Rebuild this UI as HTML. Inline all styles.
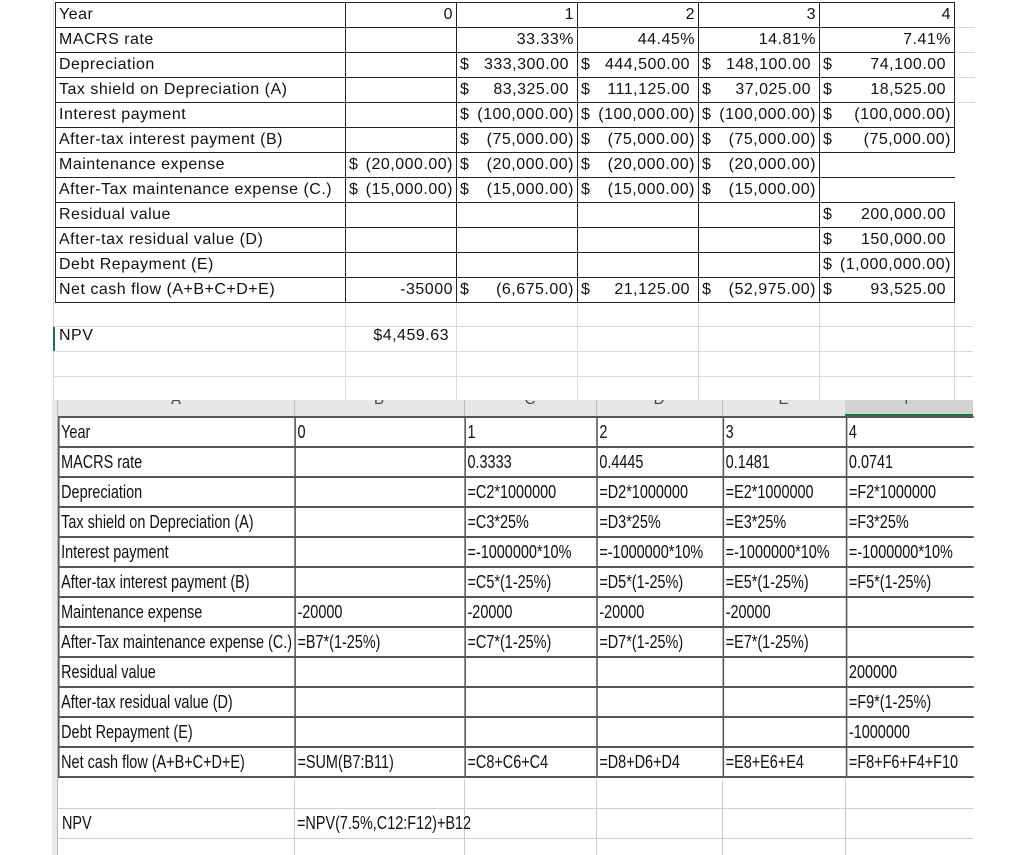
<!DOCTYPE html>
<html><head><meta charset="utf-8"><style>
body{margin:0;width:1024px;height:855px;background:#fff;position:relative;overflow:hidden}
.g{position:absolute;background:#dadada}
table{position:absolute;border-collapse:collapse;table-layout:fixed}
.t1{left:55px;top:2px;width:899px;font-family:"Liberation Sans",sans-serif;font-size:16px;letter-spacing:0.5px;color:#111}
.t1 td{height:24px;border:1px solid #222;padding:0 3px;white-space:nowrap;overflow:hidden;line-height:24px}
.r{text-align:right}
.c{display:flex;justify-content:space-between}
.t2{left:58px;top:416px;width:1173px;transform:scaleX(0.78);transform-origin:0 0;font-family:"Liberation Sans",sans-serif;font-size:18.5px;color:#111}
.t2 td{height:28px;border:2px solid #555;padding:0 2px;white-space:nowrap;overflow:hidden;line-height:28px}
.sx{position:absolute;transform:scaleX(0.78);transform-origin:0 0;font:18.5px 'Liberation Sans',sans-serif;color:#111;white-space:nowrap}
</style></head><body>
<div class="g" style="left:53px;top:0;width:1px;height:400px"></div>
<div class="g" style="left:53px;top:326px;width:920px;height:1px"></div>
<div class="g" style="left:53px;top:351px;width:920px;height:1px"></div>
<div class="g" style="left:53px;top:376px;width:920px;height:1px"></div>
<div class="g" style="left:345px;top:301px;width:1px;height:99px"></div>
<div class="g" style="left:456px;top:301px;width:1px;height:99px"></div>
<div class="g" style="left:577px;top:301px;width:1px;height:99px"></div>
<div class="g" style="left:698px;top:301px;width:1px;height:99px"></div>
<div class="g" style="left:819px;top:301px;width:1px;height:99px"></div>
<div class="g" style="left:954px;top:301px;width:1px;height:99px"></div>
<div class="g" style="left:955px;top:27px;width:20px;height:1px"></div>
<div class="g" style="left:955px;top:52px;width:20px;height:1px"></div>
<div class="g" style="left:955px;top:77px;width:20px;height:1px"></div>
<div class="g" style="left:955px;top:102px;width:20px;height:1px"></div>
<div style="position:absolute;left:53px;top:327px;width:2px;height:24px;background:#217346"></div>
<div style="position:absolute;left:59px;top:327px;height:25px;line-height:25px;font:16px 'Liberation Sans',sans-serif;letter-spacing:0.5px;color:#111">NPV</div>
<div style="position:absolute;left:345px;width:104px;top:327px;height:25px;line-height:25px;text-align:right;font:16px 'Liberation Sans',sans-serif;letter-spacing:0.5px;color:#111">$4,459.63</div>

<table class="t1">
<colgroup><col style="width:290px"><col style="width:111px"><col style="width:121px"><col style="width:121px"><col style="width:121px"><col style="width:135px"></colgroup>
<tr><td>Year</td><td class="r">0</td><td class="r">1</td><td class="r">2</td><td class="r">3</td><td class="r">4</td></tr>
<tr><td>MACRS rate</td><td></td><td class="r">33.33%</td><td class="r">44.45%</td><td class="r">14.81%</td><td class="r">7.41%</td></tr>
<tr><td>Depreciation</td><td></td><td><div class="c"><span>$</span><span>333,300.00&nbsp;</span></div></td><td><div class="c"><span>$</span><span>444,500.00&nbsp;</span></div></td><td><div class="c"><span>$</span><span>148,100.00&nbsp;</span></div></td><td><div class="c"><span>$</span><span>74,100.00&nbsp;</span></div></td></tr>
<tr><td>Tax shield on Depreciation (A)</td><td></td><td><div class="c"><span>$</span><span>83,325.00&nbsp;</span></div></td><td><div class="c"><span>$</span><span>111,125.00&nbsp;</span></div></td><td><div class="c"><span>$</span><span>37,025.00&nbsp;</span></div></td><td><div class="c"><span>$</span><span>18,525.00&nbsp;</span></div></td></tr>
<tr><td>Interest payment</td><td></td><td><div class="c"><span>$</span><span>(100,000.00)</span></div></td><td><div class="c"><span>$</span><span>(100,000.00)</span></div></td><td><div class="c"><span>$</span><span>(100,000.00)</span></div></td><td><div class="c"><span>$</span><span>(100,000.00)</span></div></td></tr>
<tr><td>After-tax interest payment (B)</td><td></td><td><div class="c"><span>$</span><span>(75,000.00)</span></div></td><td><div class="c"><span>$</span><span>(75,000.00)</span></div></td><td><div class="c"><span>$</span><span>(75,000.00)</span></div></td><td><div class="c"><span>$</span><span>(75,000.00)</span></div></td></tr>
<tr><td>Maintenance expense</td><td><div class="c"><span>$</span><span>(20,000.00)</span></div></td><td><div class="c"><span>$</span><span>(20,000.00)</span></div></td><td><div class="c"><span>$</span><span>(20,000.00)</span></div></td><td><div class="c"><span>$</span><span>(20,000.00)</span></div></td><td style="border-right:none"></td></tr>
<tr><td>After-Tax maintenance expense (C.)</td><td><div class="c"><span>$</span><span>(15,000.00)</span></div></td><td><div class="c"><span>$</span><span>(15,000.00)</span></div></td><td><div class="c"><span>$</span><span>(15,000.00)</span></div></td><td><div class="c"><span>$</span><span>(15,000.00)</span></div></td><td style="border-right:none"></td></tr>
<tr><td>Residual value</td><td></td><td></td><td></td><td></td><td><div class="c"><span>$</span><span>200,000.00&nbsp;</span></div></td></tr>
<tr><td>After-tax residual value (D)</td><td></td><td></td><td></td><td></td><td><div class="c"><span>$</span><span>150,000.00&nbsp;</span></div></td></tr>
<tr><td>Debt Repayment (E)</td><td></td><td></td><td></td><td></td><td><div class="c"><span>$</span><span>(1,000,000.00)</span></div></td></tr>
<tr><td>Net cash flow (A+B+C+D+E)</td><td class="r">-35000</td><td><div class="c"><span>$</span><span>(6,675.00)</span></div></td><td><div class="c"><span>$</span><span>21,125.00&nbsp;</span></div></td><td><div class="c"><span>$</span><span>(52,975.00)</span></div></td><td><div class="c"><span>$</span><span>93,525.00&nbsp;</span></div></td></tr>
</table>

<div style="position:absolute;left:52px;top:400px;width:5px;height:455px;background:#e8e8e8;border-right:1px solid #bbb"></div>
<div style="position:absolute;left:58px;top:400px;width:915px;height:16px;background:#e6e6e6;overflow:hidden;font:15px 'Liberation Sans',sans-serif;color:#444">
<div style="position:absolute;left:0;width:236px;top:-9px;text-align:center;border-right:1px solid #bbb;height:30px">A</div>
<div style="position:absolute;left:236px;width:170px;top:-9px;text-align:center;border-right:1px solid #bbb;height:30px">B</div>
<div style="position:absolute;left:406px;width:132px;top:-9px;text-align:center;border-right:1px solid #bbb;height:30px">C</div>
<div style="position:absolute;left:538px;width:126px;top:-9px;text-align:center;border-right:1px solid #bbb;height:30px">D</div>
<div style="position:absolute;left:664px;width:123px;top:-9px;text-align:center;border-right:1px solid #bbb;height:30px">E</div>
<div style="position:absolute;left:787px;width:128px;top:-9px;text-align:center;height:30px;background:#d2d2d2;color:#217346">F</div>
<div style="position:absolute;left:787px;width:128px;top:14px;height:2px;background:#217346"></div>
</div>
<div class="g" style="left:58px;top:808px;width:915px;height:1px;background:#ccc"></div>
<div class="g" style="left:58px;top:838px;width:915px;height:1px;background:#ccc"></div>
<div class="g" style="left:294px;top:779px;width:1px;height:76px;background:#ccc"></div>
<div class="g" style="left:464px;top:779px;width:1px;height:76px;background:#ccc"></div>
<div class="g" style="left:596px;top:779px;width:1px;height:76px;background:#ccc"></div>
<div class="g" style="left:722px;top:779px;width:1px;height:76px;background:#ccc"></div>
<div class="g" style="left:845px;top:779px;width:1px;height:76px;background:#ccc"></div>
<div class="sx" style="left:62px;top:808px;line-height:30px">NPV</div>
<div class="sx" style="left:297px;top:808px;line-height:30px">=NPV(7.5%,C12:F12)+B12</div>

<table class="t2">
<colgroup><col style="width:303px"><col style="width:218px"><col style="width:169px"><col style="width:162px"><col style="width:158px"><col style="width:163px"></colgroup>
<tr><td>Year</td><td>0</td><td>1</td><td>2</td><td>3</td><td style="border-right:none">4</td></tr>
<tr><td>MACRS rate</td><td></td><td>0.3333</td><td>0.4445</td><td>0.1481</td><td style="border-right:none">0.0741</td></tr>
<tr><td>Depreciation</td><td></td><td>=C2*1000000</td><td>=D2*1000000</td><td>=E2*1000000</td><td style="border-right:none">=F2*1000000</td></tr>
<tr><td>Tax shield on Depreciation (A)</td><td></td><td>=C3*25%</td><td>=D3*25%</td><td>=E3*25%</td><td style="border-right:none">=F3*25%</td></tr>
<tr><td>Interest payment</td><td></td><td>=-1000000*10%</td><td>=-1000000*10%</td><td>=-1000000*10%</td><td style="border-right:none">=-1000000*10%</td></tr>
<tr><td>After-tax interest payment (B)</td><td></td><td>=C5*(1-25%)</td><td>=D5*(1-25%)</td><td>=E5*(1-25%)</td><td style="border-right:none">=F5*(1-25%)</td></tr>
<tr><td>Maintenance expense</td><td>-20000</td><td>-20000</td><td>-20000</td><td>-20000</td><td style="border-right:none"></td></tr>
<tr><td>After-Tax maintenance expense (C.)</td><td>=B7*(1-25%)</td><td>=C7*(1-25%)</td><td>=D7*(1-25%)</td><td>=E7*(1-25%)</td><td style="border-right:none"></td></tr>
<tr><td>Residual value</td><td></td><td></td><td></td><td></td><td style="border-right:none">200000</td></tr>
<tr><td>After-tax residual value (D)</td><td></td><td></td><td></td><td></td><td style="border-right:none">=F9*(1-25%)</td></tr>
<tr><td>Debt Repayment (E)</td><td></td><td></td><td></td><td></td><td style="border-right:none">-1000000</td></tr>
<tr><td>Net cash flow (A+B+C+D+E)</td><td>=SUM(B7:B11)</td><td>=C8+C6+C4</td><td>=D8+D6+D4</td><td>=E8+E6+E4</td><td style="border-right:none">=F8+F6+F4+F10</td></tr>
</table>
</body></html>
